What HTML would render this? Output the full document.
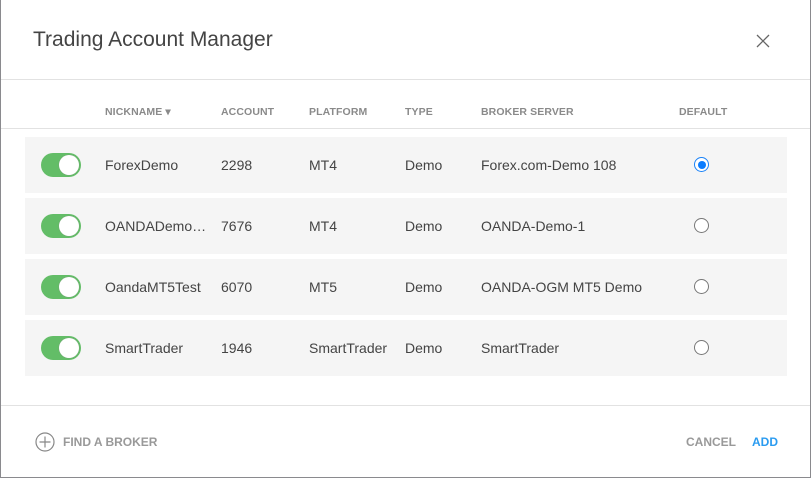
<!DOCTYPE html>
<html><head><style>
body{margin:0;width:812px;height:479px;background:#fff;font-family:"Liberation Sans",sans-serif;position:relative;overflow:hidden}
.frame{position:absolute;left:0;top:0;width:809px;height:477px;border:1px solid #8a8a8e;border-top:none;background:#fff}
.t{position:absolute;white-space:nowrap}
.title{left:33px;top:28px;font-size:21px;color:#444}
.hl{position:absolute;left:1px;width:809px;height:1px;background:#e2e2e2}
.hd{top:106px;font-size:10.5px;color:#8a8a8a;font-weight:bold;letter-spacing:0.1px}
.row{position:absolute;left:25px;width:762px;height:56px;background:#f5f5f5}
.row .t{top:20px;font-size:14px;color:#444}
.tg{position:absolute;left:16px;top:16px;width:40px;height:24px;border-radius:12px;background:#63bd67}
.tg:after{content:"";position:absolute;right:2px;top:2px;width:20px;height:20px;border-radius:50%;background:#fff;box-shadow:0 0 1px #888}
.rd{position:absolute;left:669px;top:20px;width:13px;height:13px;border:1.5px solid #777;border-radius:50%;background:#fff}
.rd.on{border-color:#1a82f7}
.rd.on:after{content:"";position:absolute;left:2.5px;top:2.5px;width:8px;height:8px;border-radius:50%;background:#0a7cff}
.ft{top:435px;font-size:12px;font-weight:bold}
</style></head><body>
<div class="frame"></div>
<div class="t title">Trading Account Manager</div>
<svg style="position:absolute;left:756px;top:34px" width="14" height="14"><path d="M1 1L13 13M13 1L1 13" stroke="#666" stroke-width="1.3"/></svg>
<div class="hl" style="top:79px"></div>
<div class="t hd" style="left:105px">NICKNAME ▾</div>
<div class="t hd" style="left:221px">ACCOUNT</div>
<div class="t hd" style="left:309px">PLATFORM</div>
<div class="t hd" style="left:405px">TYPE</div>
<div class="t hd" style="left:481px">BROKER SERVER</div>
<div class="t hd" style="left:679px">DEFAULT</div>
<div class="hl" style="top:128px"></div>

<div class="row" style="top:137px"><div class="tg"></div><div class="t" style="left:80px">ForexDemo</div><div class="t" style="left:196px">2298</div><div class="t" style="left:284px">MT4</div><div class="t" style="left:380px">Demo</div><div class="t" style="left:456px">Forex.com-Demo 108</div><div class="rd on"></div></div>
<div class="row" style="top:198px"><div class="tg"></div><div class="t" style="left:80px">OANDADemo…</div><div class="t" style="left:196px">7676</div><div class="t" style="left:284px">MT4</div><div class="t" style="left:380px">Demo</div><div class="t" style="left:456px">OANDA-Demo-1</div><div class="rd"></div></div>
<div class="row" style="top:259px"><div class="tg"></div><div class="t" style="left:80px">OandaMT5Test</div><div class="t" style="left:196px">6070</div><div class="t" style="left:284px">MT5</div><div class="t" style="left:380px">Demo</div><div class="t" style="left:456px">OANDA-OGM MT5 Demo</div><div class="rd"></div></div>
<div class="row" style="top:320px"><div class="tg"></div><div class="t" style="left:80px">SmartTrader</div><div class="t" style="left:196px">1946</div><div class="t" style="left:284px">SmartTrader</div><div class="t" style="left:380px">Demo</div><div class="t" style="left:456px">SmartTrader</div><div class="rd"></div></div>

<div class="hl" style="top:405px"></div>
<svg style="position:absolute;left:35px;top:432px" width="20" height="20"><circle cx="10" cy="10" r="9" fill="none" stroke="#888" stroke-width="1.2"/><path d="M10 4.5V15.5M4.5 10H15.5" stroke="#888" stroke-width="1.2"/></svg>
<div class="t ft" style="left:63px;color:#999">FIND A BROKER</div>
<div class="t ft" style="left:686px;color:#999">CANCEL</div>
<div class="t ft" style="left:752px;color:#2a9bf0">ADD</div>
</body></html>
